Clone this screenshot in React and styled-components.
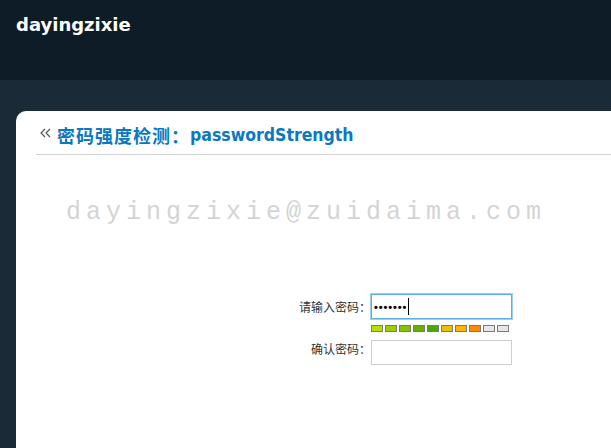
import React from "react";
import styled, { createGlobalStyle } from "styled-components";

const GlobalStyle = createGlobalStyle`
  html, body {
    margin: 0;
    padding: 0;
    background: #1a2a36;
    height: 100%;
    overflow: hidden;
  }
  body {
    font-family: "Noto Sans CJK SC", "DejaVu Sans", sans-serif;
  }
`;

const TopBar = styled.div`
  height: 80px;
  background: #0d1c27;
  box-sizing: border-box;
  padding: 13px 0 0 16px;
`;
const Brand = styled.div`
  font-family: "DejaVu Sans", sans-serif;
  font-weight: bold;
  font-size: 18px;
  line-height: 24px;
  color: #fff;
`;
const Main = styled.div`
  padding: 31px 0 0 16px;
`;
const Card = styled.div`
  background: #fff;
  border-top-left-radius: 10px;
  min-height: 337px;
`;
const TitleRow = styled.div`
  display: flex;
  align-items: center;
  padding: 12px 0 7px 24px;
  height: 24px;
`;
const Back = styled.svg`
  width: 11px;
  height: 10px;
  margin: -4px 6px 0 0;
`;
const TitleCn = styled.span`
  font-family: "Noto Sans CJK SC", sans-serif;
  font-weight: bold;
  font-size: 18px;
  letter-spacing: 1px;
  color: #0a78c2;
`;
const TitleEn = styled.span`
  font-family: "DejaVu Sans Condensed", "DejaVu Sans", sans-serif;
  font-stretch: condensed;
  font-weight: bold;
  font-size: 17.5px;
  color: #0a78c2;
`;
const Divider = styled.div`
  height: 1px;
  margin-left: 20px;
  background: #d2d2d2;
`;
const Watermark = styled.div`
  margin: 45px 0 0 50px;
  font-family: "Liberation Mono", monospace;
  font-size: 25px;
  line-height: 25px;
  letter-spacing: 5px;
  color: #d4d4d4;
  white-space: nowrap;
`;
const Form = styled.div`
  display: grid;
  grid-template-columns: 355px 141px;
  margin-top: 69px;
`;
const Label = styled.label`
  justify-self: end;
  align-self: center;
  font-size: 12px;
  color: #333;
`;
const Field = styled.div`
  box-sizing: border-box;
  height: 25px;
  border: 1px solid ${(p) => (p.$focus ? "#58b0e6" : "#cfcfcf")};
  box-shadow: ${(p) => (p.$focus ? "0 0 0 1px #9ad0f0" : "none")};
  display: flex;
  align-items: center;
  padding-left: 2px;
  margin-top: ${(p) => p.$top || 0}px;
`;
const Dots = styled.span`
  font-family: "Liberation Sans", sans-serif;
  font-size: 11px;
  font-weight: bold;
  color: #000;
  letter-spacing: 0.9px;
`;
const Caret = styled.span`
  width: 1px;
  height: 17px;
  background: #000;
  margin-left: 1px;
`;
const Meter = styled.div`
  grid-column: 2;
  display: flex;
  gap: 2px;
  margin: 6px 0 0 0;
`;
const Seg = styled.div`
  box-sizing: border-box;
  width: 12px;
  height: 7px;
  border: 1px solid #7a7a7a;
  background: ${(p) => p.$color};
`;

const levels = [
  "#b5e000",
  "#9ad000",
  "#84c300",
  "#68ae00",
  "#46aa00",
  "#e8c000",
  "#ffb400",
  "#ff8a00",
  "#e6e6e6",
  "#e6e6e6",
];

export default function App() {
  return (
    <>
      <GlobalStyle />
      <TopBar>
        <Brand>dayingzixie</Brand>
      </TopBar>
      <Main>
        <Card>
          <TitleRow>
            <Back viewBox="0 0 11 10">
              <polyline points="5,1 1,5 5,9" fill="none" stroke="#555" strokeWidth="1.2" />
              <polyline points="10,1 6,5 10,9" fill="none" stroke="#555" strokeWidth="1.2" />
            </Back>
            <TitleCn>密码强度检测：</TitleCn>
            <TitleEn>passwordStrength</TitleEn>
          </TitleRow>
          <Divider />
          <Watermark>dayingzixie@zuidaima.com</Watermark>
          <Form>
            <Label>请输入密码：</Label>
            <Field $focus>
              <Dots>•••••••</Dots>
              <Caret />
            </Field>
            <Meter>
              {levels.map((c, i) => (
                <Seg key={i} $color={c} />
              ))}
            </Meter>
            <Label>确认密码：</Label>
            <Field $top={8} />
          </Form>
        </Card>
      </Main>
    </>
  );
}
